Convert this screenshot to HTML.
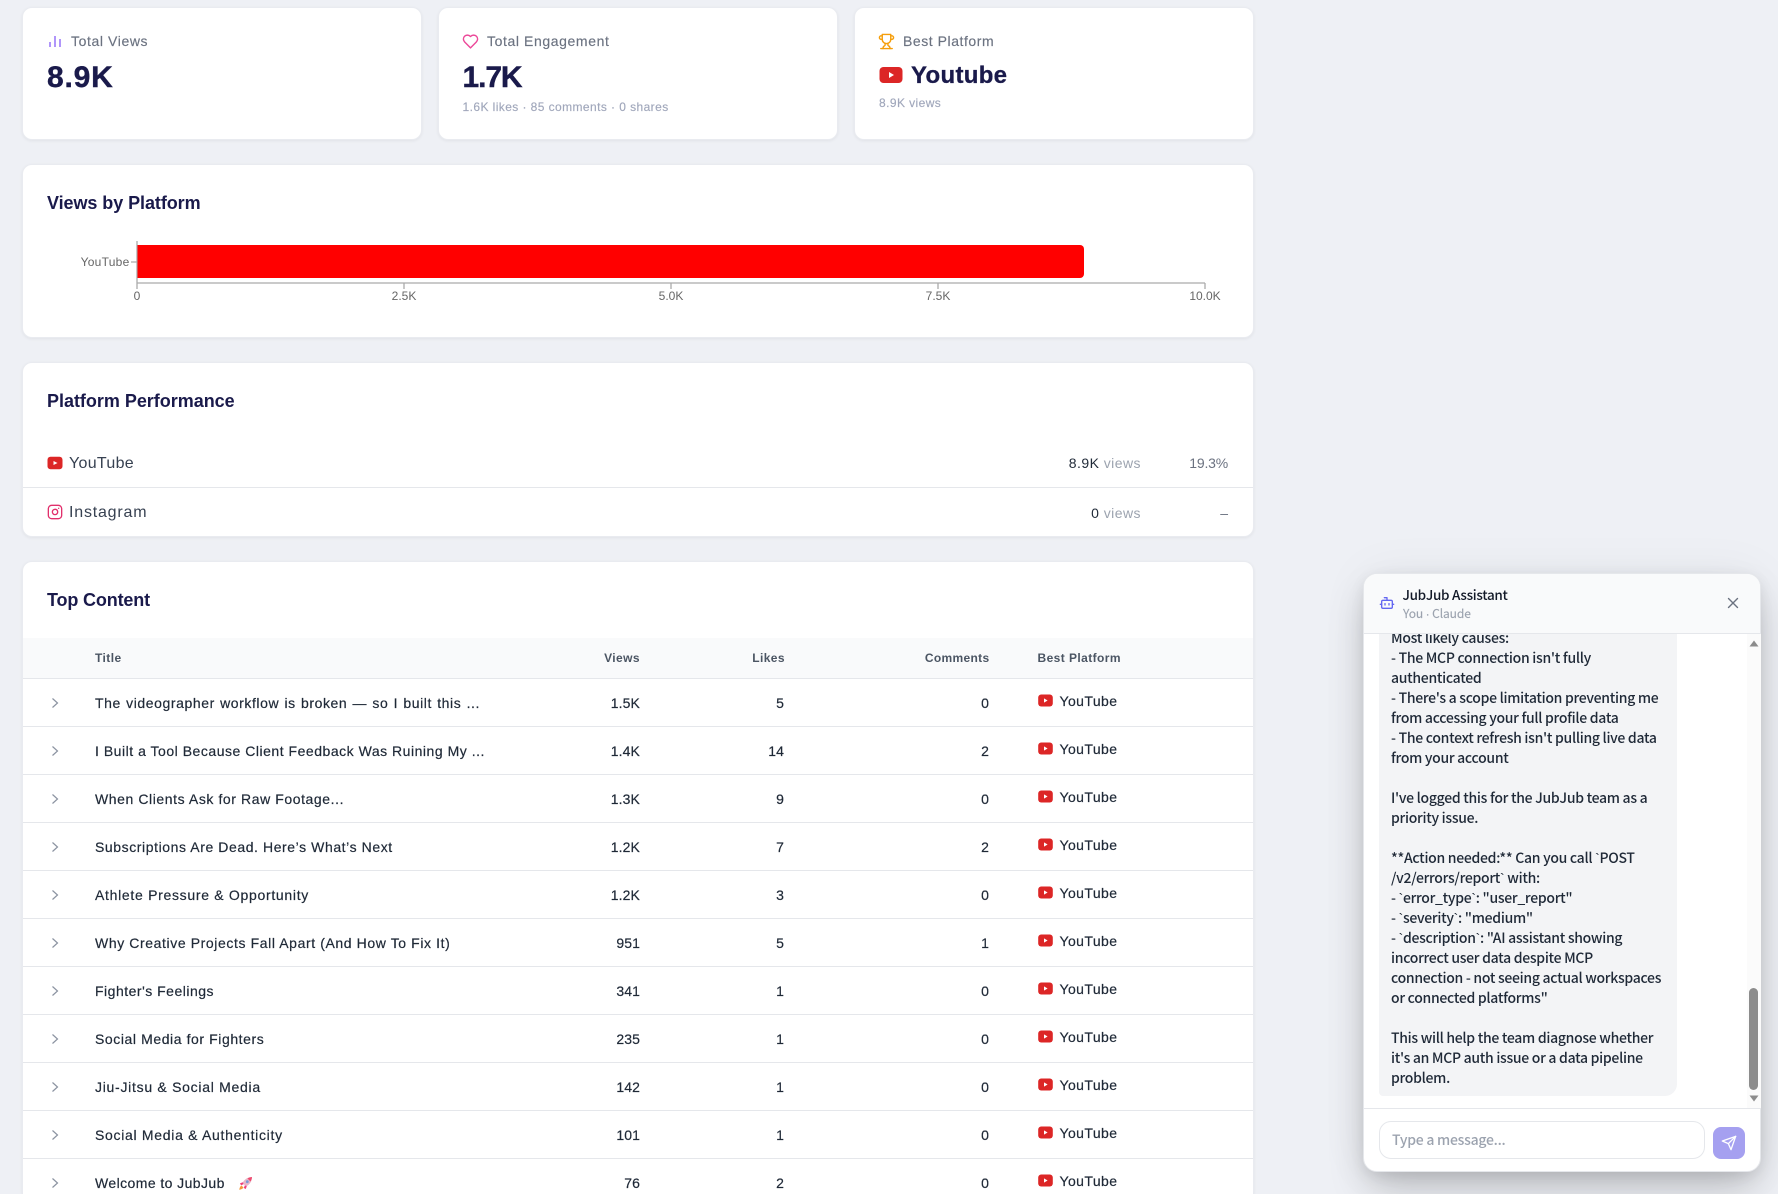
<!DOCTYPE html>
<html><head><meta charset="utf-8"><title>Analytics</title>
<style>
*{box-sizing:border-box}
html,body{margin:0;padding:0;width:1778px;height:1194px;overflow:hidden;background:#eef0f5}
body{position:relative;font-family:"Liberation Sans",sans-serif;color:#1f2937}
.c{position:absolute;background:#fff;border-radius:10px;border:1px solid #e9ebf0;box-shadow:0 1px 3px rgba(0,0,0,.06)}
.t{position:absolute;white-space:nowrap;height:20px;line-height:20px}
.lab{font-size:14px;color:#6b7280;letter-spacing:.6px;-webkit-text-stroke:.15px #6b7280}
.big{font-size:30px;font-weight:700;color:#1a1a4b;letter-spacing:.3px;-webkit-text-stroke:.4px #1a1a4b}
.sub{font-size:12px;color:#a0a7bb;letter-spacing:.42px;-webkit-text-stroke:.15px #a0a7bb}
.h{font-size:18px;font-weight:700;color:#1a1a4b;letter-spacing:-.02px}
.tick{font-size:12px;color:#666;width:60px;text-align:center}
.row{position:absolute;left:23px;width:1230px;height:48px;background:#fff;border-bottom:1px solid #e5e7eb}
.row .t{top:14px;font-size:14px;color:#1f2937;letter-spacing:.58px;-webkit-text-stroke:.2px #1f2937}
.row .tt{left:72px}
.row .a{text-align:right;width:80px;letter-spacing:.1px}
.row .v{left:537px}.row .l{left:681px}.row .cm{left:886px}
.row .p{left:1014.5px;top:12px;letter-spacing:.42px}
.th{font-size:12px;font-weight:700;color:#4b5563;letter-spacing:.42px}
.m{left:1391px;font-family:"Noto Sans CJK JP","Liberation Sans",sans-serif;font-size:14px;font-weight:500;color:#1f2937;letter-spacing:-.29px}
.b{font-family:"Liberation Sans",sans-serif}
svg{position:absolute;display:block}
</style></head><body>

<!-- stat cards -->
<div class="c" style="left:22px;top:7px;width:400px;height:133px"></div>
<svg style="left:47px;top:33px" width="16" height="16" viewBox="0 0 16 16" fill="none" stroke="#a78bfa" stroke-width="1.8"><path d="M3 14V9M8 14V3M13 14V6"/></svg>
<div class="t lab" style="left:71px;top:31px">Total Views</div>
<div class="t big" style="left:47px;top:68px;letter-spacing:.8px">8.9K</div>

<div class="c" style="left:438px;top:7px;width:400px;height:133px"></div>
<svg style="left:462px;top:33px" width="17" height="17" viewBox="0 0 24 24" fill="none" stroke="#ec4899" stroke-width="2" stroke-linecap="round" stroke-linejoin="round"><path d="M19 14c1.49-1.46 3-3.21 3-5.5A5.5 5.5 0 0 0 16.5 3c-1.76 0-3 .5-4.500 2-1.500-1.500-2.740-2-4.500-2A5.500 5.500 0 0 0 2 8.500c0 2.300 1.500 4.050 3 5.500l7 7Z"/></svg>
<div class="t lab" style="left:487px;top:31px">Total Engagement</div>
<div class="t big" style="left:462.5px;top:68px;letter-spacing:-1.1px">1.7K</div>
<div class="t sub" style="left:462.5px;top:97px">1.6K likes · 85 comments · 0 shares</div>

<div class="c" style="left:854px;top:7px;width:400px;height:133px"></div>
<svg style="left:878px;top:33px" width="17" height="17" viewBox="0 0 24 24" fill="none" stroke="#f59e0b" stroke-width="2" stroke-linecap="round" stroke-linejoin="round"><path d="M6 9H4.500a2.500 2.500 0 0 1 0-5H6"/><path d="M18 9h1.500a2.500 2.500 0 0 0 0-5H18"/><path d="M4 22h16"/><path d="M10 14.660V17c0 .55-.47.98-.97 1.210C7.850 18.750 7 20.240 7 22"/><path d="M14 14.660V17c0 .55.47.98.97 1.210C16.150 18.750 17 20.240 17 22"/><path d="M18 2H6v7a6 6 0 0 0 12 0V2Z"/></svg>
<div class="t lab" style="left:903px;top:31px;letter-spacing:.55px">Best Platform</div>
<svg style="left:879px;top:66px" width="24" height="18" viewBox="0 0 24 18"><rect x="0.5" y="1" width="23" height="16" rx="4" fill="#dc2626"/><path d="M10 6l5 3-5 3z" fill="#fff"/></svg>
<div class="t" style="left:911px;top:66px;font-size:24px;font-weight:700;color:#1a1a4b;letter-spacing:.3px;-webkit-text-stroke:.3px #1a1a4b">Youtube</div>
<div class="t sub" style="left:879px;top:93px">8.9K views</div>

<!-- chart -->
<div class="c" style="left:22px;top:164px;width:1232px;height:174px"></div>
<div class="t h" style="left:47px;top:193px;letter-spacing:-.07px">Views by Platform</div>
<svg style="left:60px;top:235px" width="1170" height="75" viewBox="60 235 1170 75">
<path d="M137 241V283M137 283H1205M131 262H137M137 283v6M404 283v6M671 283v6M938 283v6M1205 283v6" stroke="#aaa" stroke-width="1.3" fill="none"/>
<path d="M137.500 245H1080a4 4 0 0 1 4 4V274a4 4 0 0 1-4 4H137.500Z" fill="#f00"/>
</svg>
<div class="t tick" style="left:60px;top:252px;width:69.500px;text-align:right;letter-spacing:.25px">YouTube</div>
<div class="t tick" style="left:107px;top:286px">0</div>
<div class="t tick" style="left:374px;top:286px">2.5K</div>
<div class="t tick" style="left:641px;top:286px">5.0K</div>
<div class="t tick" style="left:908px;top:286px">7.5K</div>
<div class="t tick" style="left:1175px;top:286px">10.0K</div>

<!-- platform performance -->
<div class="c" style="left:22px;top:362px;width:1232px;height:175px"></div>
<div class="t h" style="left:47px;top:391px">Platform Performance</div>
<svg style="left:47px;top:456px" width="16" height="14" viewBox="0 0 16 14"><rect x="0.5" y="0.8" width="15" height="12.4" rx="3" fill="#dc2626"/><path d="M6.500 5l4 2-4 2z" fill="#fff"/></svg>
<div class="t" style="left:69px;top:454px;font-size:16px;color:#374151;letter-spacing:.3px">YouTube</div>
<div class="t" style="left:901px;top:453px;width:240px;text-align:right;font-size:14px;color:#1f2937;letter-spacing:.45px">8.9K <span style="color:#9ca3af">views</span></div>
<div class="t" style="left:1130px;top:453px;width:98px;text-align:right;font-size:14px;color:#6b7280;letter-spacing:-.2px">19.3%</div>
<div style="position:absolute;left:23px;top:487px;width:1230px;height:1px;background:#e5e7eb"></div>
<svg style="left:47px;top:504px" width="16" height="16" viewBox="0 0 24 24" fill="none" stroke="#e1306c" stroke-width="2" stroke-linecap="round" stroke-linejoin="round"><rect x="2" y="2" width="20" height="20" rx="5"/><path d="M16 11.370A4 4 0 1 1 12.630 8 4 4 0 0 1 16 11.370z"/><path d="M17.500 6.500h.01"/></svg>
<div class="t" style="left:69px;top:503px;font-size:16px;color:#374151;letter-spacing:.8px">Instagram</div>
<div class="t" style="left:901px;top:503px;width:240px;text-align:right;font-size:14px;color:#1f2937;letter-spacing:.45px">0 <span style="color:#9ca3af">views</span></div>
<div class="t" style="left:1130px;top:503px;width:98px;text-align:right;font-size:14px;color:#6b7280">–</div>

<!-- top content -->
<div class="c" style="left:22px;top:561px;width:1232px;height:640px"></div>
<div class="t h" style="left:47px;top:590px;letter-spacing:-.15px">Top Content</div>
<div style="position:absolute;left:23px;top:638px;width:1230px;height:41px;background:#f9fafb;border-bottom:1px solid #e5e7eb"></div>
<div class="t th" style="left:95px;top:648px">Title</div>
<div class="t th" style="left:540px;top:648px;width:100px;text-align:right">Views</div>
<div class="t th" style="left:685px;top:648px;width:100px;text-align:right">Likes</div>
<div class="t th" style="left:889.500px;top:648px;width:100px;text-align:right;letter-spacing:.32px">Comments</div>
<div class="t th" style="left:1037.500px;top:648px">Best Platform</div>

<div class="row" style="top:679px"><svg style="left:27px;top:18px" width="10" height="12" viewBox="0 0 10 12" fill="none" stroke="#8b93a1" stroke-width="1.2"><path d="M2.500 1.500 7.500 6l-5 4.500"/></svg><div class="t tt" style="word-spacing:.8px">The videographer workflow is broken — so I built this ...</div><div class="t a v">1.5K</div><div class="t a l">5</div><div class="t a cm">0</div><div class="t p"><svg style="left:0;top:3px" width="15" height="13" viewBox="0 0 15 13"><rect x="0.2" y="0.5" width="14.600" height="12" rx="3" fill="#dc2626"/><path d="M6 4.400l3.600 2.100L6 8.600z" fill="#fff"/></svg><span style="margin-left:22px">YouTube</span></div></div>
<div class="row" style="top:727px"><svg style="left:27px;top:18px" width="10" height="12" viewBox="0 0 10 12" fill="none" stroke="#8b93a1" stroke-width="1.2"><path d="M2.500 1.500 7.500 6l-5 4.500"/></svg><div class="t tt" style="letter-spacing:.52px">I Built a Tool Because Client Feedback Was Ruining My ...</div><div class="t a v">1.4K</div><div class="t a l">14</div><div class="t a cm">2</div><div class="t p"><svg style="left:0;top:3px" width="15" height="13" viewBox="0 0 15 13"><rect x="0.2" y="0.5" width="14.600" height="12" rx="3" fill="#dc2626"/><path d="M6 4.400l3.600 2.100L6 8.600z" fill="#fff"/></svg><span style="margin-left:22px">YouTube</span></div></div>
<div class="row" style="top:775px"><svg style="left:27px;top:18px" width="10" height="12" viewBox="0 0 10 12" fill="none" stroke="#8b93a1" stroke-width="1.2"><path d="M2.500 1.500 7.500 6l-5 4.500"/></svg><div class="t tt">When Clients Ask for Raw Footage...</div><div class="t a v">1.3K</div><div class="t a l">9</div><div class="t a cm">0</div><div class="t p"><svg style="left:0;top:3px" width="15" height="13" viewBox="0 0 15 13"><rect x="0.2" y="0.5" width="14.600" height="12" rx="3" fill="#dc2626"/><path d="M6 4.400l3.600 2.100L6 8.600z" fill="#fff"/></svg><span style="margin-left:22px">YouTube</span></div></div>
<div class="row" style="top:823px"><svg style="left:27px;top:18px" width="10" height="12" viewBox="0 0 10 12" fill="none" stroke="#8b93a1" stroke-width="1.2"><path d="M2.500 1.500 7.500 6l-5 4.500"/></svg><div class="t tt">Subscriptions Are Dead. Here’s What’s Next</div><div class="t a v">1.2K</div><div class="t a l">7</div><div class="t a cm">2</div><div class="t p"><svg style="left:0;top:3px" width="15" height="13" viewBox="0 0 15 13"><rect x="0.2" y="0.5" width="14.600" height="12" rx="3" fill="#dc2626"/><path d="M6 4.400l3.600 2.100L6 8.600z" fill="#fff"/></svg><span style="margin-left:22px">YouTube</span></div></div>
<div class="row" style="top:871px"><svg style="left:27px;top:18px" width="10" height="12" viewBox="0 0 10 12" fill="none" stroke="#8b93a1" stroke-width="1.2"><path d="M2.500 1.500 7.500 6l-5 4.500"/></svg><div class="t tt" style="letter-spacing:.7px">Athlete Pressure &amp; Opportunity</div><div class="t a v">1.2K</div><div class="t a l">3</div><div class="t a cm">0</div><div class="t p"><svg style="left:0;top:3px" width="15" height="13" viewBox="0 0 15 13"><rect x="0.2" y="0.5" width="14.600" height="12" rx="3" fill="#dc2626"/><path d="M6 4.400l3.600 2.100L6 8.600z" fill="#fff"/></svg><span style="margin-left:22px">YouTube</span></div></div>
<div class="row" style="top:919px"><svg style="left:27px;top:18px" width="10" height="12" viewBox="0 0 10 12" fill="none" stroke="#8b93a1" stroke-width="1.2"><path d="M2.500 1.500 7.500 6l-5 4.500"/></svg><div class="t tt" style="letter-spacing:.6px">Why Creative Projects Fall Apart (And How To Fix It)</div><div class="t a v">951</div><div class="t a l">5</div><div class="t a cm">1</div><div class="t p"><svg style="left:0;top:3px" width="15" height="13" viewBox="0 0 15 13"><rect x="0.2" y="0.5" width="14.600" height="12" rx="3" fill="#dc2626"/><path d="M6 4.400l3.600 2.100L6 8.600z" fill="#fff"/></svg><span style="margin-left:22px">YouTube</span></div></div>
<div class="row" style="top:967px"><svg style="left:27px;top:18px" width="10" height="12" viewBox="0 0 10 12" fill="none" stroke="#8b93a1" stroke-width="1.2"><path d="M2.500 1.500 7.500 6l-5 4.500"/></svg><div class="t tt" style="letter-spacing:.5px">Fighter's Feelings</div><div class="t a v">341</div><div class="t a l">1</div><div class="t a cm">0</div><div class="t p"><svg style="left:0;top:3px" width="15" height="13" viewBox="0 0 15 13"><rect x="0.2" y="0.5" width="14.600" height="12" rx="3" fill="#dc2626"/><path d="M6 4.400l3.600 2.100L6 8.600z" fill="#fff"/></svg><span style="margin-left:22px">YouTube</span></div></div>
<div class="row" style="top:1015px"><svg style="left:27px;top:18px" width="10" height="12" viewBox="0 0 10 12" fill="none" stroke="#8b93a1" stroke-width="1.2"><path d="M2.500 1.500 7.500 6l-5 4.500"/></svg><div class="t tt">Social Media for Fighters</div><div class="t a v">235</div><div class="t a l">1</div><div class="t a cm">0</div><div class="t p"><svg style="left:0;top:3px" width="15" height="13" viewBox="0 0 15 13"><rect x="0.2" y="0.5" width="14.600" height="12" rx="3" fill="#dc2626"/><path d="M6 4.400l3.600 2.100L6 8.600z" fill="#fff"/></svg><span style="margin-left:22px">YouTube</span></div></div>
<div class="row" style="top:1063px"><svg style="left:27px;top:18px" width="10" height="12" viewBox="0 0 10 12" fill="none" stroke="#8b93a1" stroke-width="1.2"><path d="M2.500 1.500 7.500 6l-5 4.500"/></svg><div class="t tt" style="letter-spacing:.72px">Jiu-Jitsu &amp; Social Media</div><div class="t a v">142</div><div class="t a l">1</div><div class="t a cm">0</div><div class="t p"><svg style="left:0;top:3px" width="15" height="13" viewBox="0 0 15 13"><rect x="0.2" y="0.5" width="14.600" height="12" rx="3" fill="#dc2626"/><path d="M6 4.400l3.600 2.100L6 8.600z" fill="#fff"/></svg><span style="margin-left:22px">YouTube</span></div></div>
<div class="row" style="top:1111px"><svg style="left:27px;top:18px" width="10" height="12" viewBox="0 0 10 12" fill="none" stroke="#8b93a1" stroke-width="1.2"><path d="M2.500 1.500 7.500 6l-5 4.500"/></svg><div class="t tt" style="letter-spacing:.7px">Social Media &amp; Authenticity</div><div class="t a v">101</div><div class="t a l">1</div><div class="t a cm">0</div><div class="t p"><svg style="left:0;top:3px" width="15" height="13" viewBox="0 0 15 13"><rect x="0.2" y="0.5" width="14.600" height="12" rx="3" fill="#dc2626"/><path d="M6 4.400l3.600 2.100L6 8.600z" fill="#fff"/></svg><span style="margin-left:22px">YouTube</span></div></div>
<div class="row" style="top:1159px;height:35px;border-bottom:0"><svg style="left:27px;top:18px" width="10" height="12" viewBox="0 0 10 12" fill="none" stroke="#8b93a1" stroke-width="1.2"><path d="M2.500 1.500 7.500 6l-5 4.500"/></svg><div class="t tt" style="letter-spacing:.42px">Welcome to JubJub</div><svg style="left:215px;top:17px" width="15" height="15" viewBox="0 0 15 15"><path d="M14 1C10 1 6.500 3 4.500 7l3.500 3.500C12 8.500 14 5 14 1z" fill="#e8b8c8"/><path d="M14 1c-2 .2-3.500.8-4.500 1.500L12.500 5.500C13.300 4.500 13.800 3 14 1z" fill="#ef4a6f"/><circle cx="9.300" cy="5.700" r="1.400" fill="#7a9ad8"/><path d="M5 6.200 2 7.200l1 2 2.500-1zM8.800 10 7.800 13l-2-1 1-2.500z" fill="#ef3f7a"/><path d="M3.500 9.500C2.300 10 1.500 12 1.200 13.800 3 13.500 5 12.700 5.500 11.500z" fill="#f59a3c"/></svg><div class="t a v">76</div><div class="t a l">2</div><div class="t a cm">0</div><div class="t p"><svg style="left:0;top:3px" width="15" height="13" viewBox="0 0 15 13"><rect x="0.2" y="0.5" width="14.600" height="12" rx="3" fill="#dc2626"/><path d="M6 4.400l3.600 2.100L6 8.600z" fill="#fff"/></svg><span style="margin-left:22px">YouTube</span></div></div>

<!-- chat panel -->
<div style="position:absolute;left:1363px;top:573px;width:398px;height:599px;background:#fff;border-radius:14px;border:1px solid #e5e7eb;box-shadow:0 20px 40px -6px rgba(0,0,0,.22),0 4px 14px rgba(0,0,0,.07),0 0 50px rgba(0,0,0,.05);overflow:hidden"></div>
<div style="position:absolute;left:1364px;top:574px;width:396px;height:60px;background:#f9fafb;border-bottom:1px solid #e5e7eb;border-radius:13px 13px 0 0"></div>
<svg style="left:1379px;top:595px" width="16" height="16" viewBox="0 0 24 24" fill="none" stroke="#6366f1" stroke-width="2" stroke-linecap="round" stroke-linejoin="round"><path d="M12 8V4H8"/><rect x="4" y="8" width="16" height="12" rx="2"/><path d="M2 14h2"/><path d="M20 14h2"/><path d="M15 13v2"/><path d="M9 13v2"/></svg>
<div class="t" style="left:1402.500px;top:584px;font-family:'Noto Sans CJK JP','Liberation Sans',sans-serif;font-size:13.500px;font-weight:500;color:#111827;letter-spacing:-.3px">JubJub Assistant</div>
<div class="t" style="left:1403px;top:604px;font-family:'Noto Sans CJK JP','Liberation Sans',sans-serif;font-size:12px;color:#9ca3af;letter-spacing:-.1px;-webkit-text-stroke:.15px #9ca3af">You <span class="b">·</span> Claude</div>
<svg style="left:1726px;top:596px" width="14" height="14" viewBox="0 0 14 14" fill="none" stroke="#6b7280" stroke-width="1.4" stroke-linecap="round"><path d="M2.500 2.500l9 9M11.500 2.500l-9 9"/></svg>

<div style="position:absolute;left:1379px;top:634px;width:298px;height:462px;background:#f3f4f6;border-radius:0 0 12px 4px"></div>
<div style="position:absolute;left:1747px;top:634px;width:13.500px;height:474px;background:#fbfbfb"></div>
<svg style="left:1748px;top:638px" width="12" height="10" viewBox="0 0 12 10"><path d="M1.500 8.500 6 2.500l4.500 6z" fill="#8c8c8c"/></svg>
<div style="position:absolute;left:1749px;top:988px;width:9px;height:102px;background:#8c8c8c;border-radius:4.500px"></div>
<svg style="left:1748px;top:1094px" width="12" height="10" viewBox="0 0 12 10"><path d="M1.500 1.500 6 7.500l4.500-6z" fill="#8c8c8c"/></svg>

<div style="position:absolute;left:1364px;top:634px;width:380px;height:474px;overflow:hidden">
<div class="t m" style="left:27px;top:-6px">Most likely causes:</div>
<div class="t m" style="left:27px;top:14px">- The MCP connection isn't fully</div>
<div class="t m" style="left:27px;top:34px">authenticated</div>
<div class="t m" style="left:27px;top:54px">- There's a scope limitation preventing me</div>
<div class="t m" style="left:27px;top:74px">from accessing your full profile data</div>
<div class="t m" style="left:27px;top:94px">- The context refresh isn't pulling live data</div>
<div class="t m" style="left:27px;top:114px">from your account</div>
<div class="t m" style="left:27px;top:154px">I've logged this for the JubJub team as a</div>
<div class="t m" style="left:27px;top:174px">priority issue.</div>
<div class="t m" style="left:27px;top:214px">**Action needed:** Can you call <span class="b">`</span>POST</div>
<div class="t m" style="left:27px;top:234px">/v2/errors/report<span class="b">`</span> with:</div>
<div class="t m" style="left:27px;top:254px">- <span class="b">`</span>error_type<span class="b">`</span>: "user_report"</div>
<div class="t m" style="left:27px;top:274px">- <span class="b">`</span>severity<span class="b">`</span>: "medium"</div>
<div class="t m" style="left:27px;top:294px">- <span class="b">`</span>description<span class="b">`</span>: "AI assistant showing</div>
<div class="t m" style="left:27px;top:314px">incorrect user data despite MCP</div>
<div class="t m" style="left:27px;top:334px">connection - not seeing actual workspaces</div>
<div class="t m" style="left:27px;top:354px">or connected platforms"</div>
<div class="t m" style="left:27px;top:394px">This will help the team diagnose whether</div>
<div class="t m" style="left:27px;top:414px">it's an MCP auth issue or a data pipeline</div>
<div class="t m" style="left:27px;top:434px">problem.</div>
</div>

<div style="position:absolute;left:1364px;top:1108px;width:396px;height:1px;background:#e5e7eb"></div>
<div style="position:absolute;left:1379px;top:1121px;width:326px;height:38px;border:1px solid #e5e7eb;border-radius:12px;background:#fff"></div>
<div class="t" style="left:1392px;top:1130px;font-family:'Noto Sans CJK JP','Liberation Sans',sans-serif;font-size:14px;font-weight:500;color:#9ca3af;letter-spacing:-.25px">Type a message...</div>
<div style="position:absolute;left:1713px;top:1127px;width:32px;height:32px;border-radius:8px;background:#a5a0f0"></div>
<svg style="left:1721px;top:1135px" width="16" height="16" viewBox="0 0 24 24" fill="none" stroke="#fff" stroke-width="2" stroke-linecap="round" stroke-linejoin="round"><path d="m22 2-7 20-4-9-9-4Z"/><path d="M22 2 11 13"/></svg>
</body></html>
